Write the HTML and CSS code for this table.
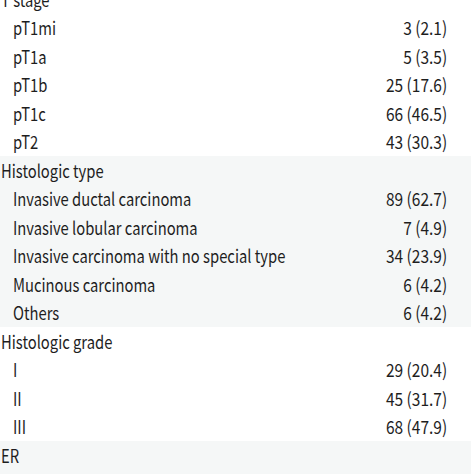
FILE: index.html
```html
<!DOCTYPE html>
<html>
<head>
<meta charset="utf-8">
<link rel="stylesheet" href="styles.css">
</head>
<body>
<div class="table">
  <div class="group">
    <div class="row head"><span class="label">T stage</span><span class="val"></span></div>
    <div class="row sub"><span class="label">pT1mi</span><span class="val">3 (2.1)</span></div>
    <div class="row sub"><span class="label">pT1a</span><span class="val">5 (3.5)</span></div>
    <div class="row sub"><span class="label">pT1b</span><span class="val">25 (17.6)</span></div>
    <div class="row sub"><span class="label">pT1c</span><span class="val">66 (46.5)</span></div>
    <div class="row sub"><span class="label">pT2</span><span class="val">43 (30.3)</span></div>
  </div>
  <div class="group shade">
    <div class="row head"><span class="label">Histologic type</span><span class="val"></span></div>
    <div class="row sub"><span class="label">Invasive ductal carcinoma</span><span class="val">89 (62.7)</span></div>
    <div class="row sub"><span class="label">Invasive lobular carcinoma</span><span class="val">7 (4.9)</span></div>
    <div class="row sub"><span class="label">Invasive carcinoma with no special type</span><span class="val">34 (23.9)</span></div>
    <div class="row sub"><span class="label">Mucinous carcinoma</span><span class="val">6 (4.2)</span></div>
    <div class="row sub"><span class="label">Others</span><span class="val">6 (4.2)</span></div>
  </div>
  <div class="group">
    <div class="row head"><span class="label">Histologic grade</span><span class="val"></span></div>
    <div class="row sub"><span class="label">I</span><span class="val">29 (20.4)</span></div>
    <div class="row sub"><span class="label">II</span><span class="val">45 (31.7)</span></div>
    <div class="row sub"><span class="label">III</span><span class="val">68 (47.9)</span></div>
  </div>
  <div class="group shade">
    <div class="row head"><span class="label">ER</span><span class="val"></span></div>
    <div class="row sub"><span class="label">Positive</span><span class="val">120 (84.5)</span></div>
  </div>
</div>
</body>
</html>
```
FILE: styles.css
```css
html, body {
  margin: 0;
  padding: 0;
  background: #ffffff;
  overflow: hidden;
}
body {
  width: 474px;
  height: 474px;
  font-family: "Noto Sans CJK KR", "Noto Sans CJK SC", "DejaVu Sans Condensed", sans-serif;
  font-size: 18px;
  color: #1e1e1e;
}
.table {
  width: 471px;
  margin-top: -15.5px;
}
.group.shade {
  background: #f5f7f7;
}
.row {
  display: flex;
  justify-content: space-between;
  align-items: center;
  height: 28.5px;
  line-height: 28.5px;
  padding-right: 24px;
  white-space: nowrap;
}
.label {
  display: inline-block;
  transform: scaleX(0.82);
  transform-origin: left center;
}
.row.head .label {
  margin-left: 1px;
}
.row.sub .label {
  margin-left: 13px;
}
.val {
  display: inline-block;
  text-align: right;
  transform: scaleX(0.86);
  transform-origin: right center;
}
```
